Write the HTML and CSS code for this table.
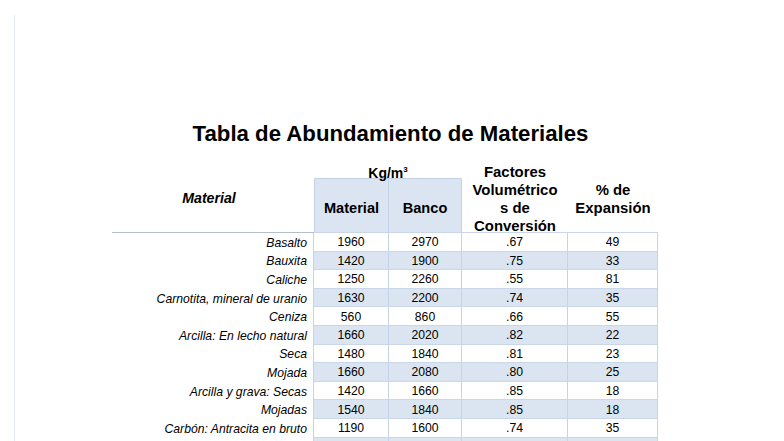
FILE: index.html
```html
<!DOCTYPE html>
<html lang="es">
<head>
<meta charset="utf-8">
<title>Tabla de Abundamiento de Materiales</title>
<link rel="stylesheet" href="styles.css">
</head>
<body>
<div class="sheet">
  <h1 class="title">Tabla de Abundamiento de Materiales</h1>
  <table class="grid">
    <colgroup>
      <col class="c-mat">
      <col class="c-n1">
      <col class="c-n2">
      <col class="c-fac">
      <col class="c-exp">
    </colgroup>
    <thead>
      <tr class="h1">
        <th rowspan="2" class="th-mat">Material</th>
        <th colspan="2" class="th-kg">Kg/m<sup>3</sup></th>
        <th rowspan="2" class="th-fac"><div class="lines">Factores<br>Volumétrico<br>s de<br>Conversión</div></th>
        <th rowspan="2" class="th-exp"><div class="lines">% de<br>Expansión</div></th>
      </tr>
      <tr class="h2">
        <th class="th-box th-box1">Material</th>
        <th class="th-box th-box2">Banco</th>
      </tr>
    </thead>
    <tbody>
      <tr><td>Basalto</td><td>1960</td><td>2970</td><td>.67</td><td>49</td></tr>
      <tr><td>Bauxita</td><td>1420</td><td>1900</td><td>.75</td><td>33</td></tr>
      <tr><td>Caliche</td><td>1250</td><td>2260</td><td>.55</td><td>81</td></tr>
      <tr><td>Carnotita, mineral de uranio</td><td>1630</td><td>2200</td><td>.74</td><td>35</td></tr>
      <tr><td>Ceniza</td><td>560</td><td>860</td><td>.66</td><td>55</td></tr>
      <tr><td>Arcilla: En lecho natural</td><td>1660</td><td>2020</td><td>.82</td><td>22</td></tr>
      <tr><td>Seca</td><td>1480</td><td>1840</td><td>.81</td><td>23</td></tr>
      <tr><td>Mojada</td><td>1660</td><td>2080</td><td>.80</td><td>25</td></tr>
      <tr><td>Arcilla y grava: Secas</td><td>1420</td><td>1660</td><td>.85</td><td>18</td></tr>
      <tr><td>Mojadas</td><td>1540</td><td>1840</td><td>.85</td><td>18</td></tr>
      <tr><td>Carbón: Antracita en bruto</td><td>1190</td><td>1600</td><td>.74</td><td>35</td></tr>
      <tr class="tail"><td></td><td></td><td></td><td></td><td></td></tr>
    </tbody>
  </table>
</div>
</body>
</html>
```
FILE: styles.css
```css
html, body {
  margin: 0;
  padding: 0;
  height: 441px;
  overflow: hidden;
  background: #ffffff;
}

body {
  font-family: "Liberation Sans", Arial, sans-serif;
  color: #000000;
}

.sheet {
  margin: 15px 0 0 14px;
  border-left: 1px solid #e3eaf4;
  height: 426px;
}

.title {
  margin: 0;
  padding: 106px 18px 0 0;
  font-size: 22.2px;
  line-height: 25px;
  font-weight: bold;
  text-align: center;
}

.grid {
  margin: 14px 0 0 97px;
  width: 546px;
  table-layout: fixed;
  border-collapse: separate;
  border-spacing: 0;
}

.c-mat { width: 202px; }
.c-n1 { width: 75px; }
.c-n2 { width: 73px; }
.c-fac { width: 106px; }
.c-exp { width: 90px; }

.grid th {
  padding: 0;
  font-weight: bold;
  font-size: 14.9px;
  line-height: 18px;
  vertical-align: top;
  text-align: center;
  border-bottom: 1px solid #c8d6e8;
}

.h1 { height: 18px; }
.h2 { height: 55px; }

.th-mat {
  font-style: italic;
  font-size: 14.2px !important;
  line-height: 17.5px !important;
  text-align: right;
  padding-right: 8px !important;
  padding-top: 30px !important;
  border-bottom-color: #b5bfcc !important;
}

.th-kg {
  font-size: 14px !important;
  line-height: 10px !important;
  padding-top: 8px !important;
  border-bottom: none !important;
}

.th-kg sup {
  font-size: 8px;
  vertical-align: 6px;
  line-height: 0;
}

.lines {
  height: 60px;
  overflow: visible;
}

.th-fac {
  padding-top: 3px !important;
}

.th-exp {
  padding-top: 21px !important;
}

.th-exp .lines {
  height: 40px;
}

.th-box {
  font-size: 14.6px !important;
  background: #dbe5f1;
  border-top: 1px solid #c3d2e6;
  border-right: 1px solid #c3d2e6;
  padding-top: 21px !important;
  line-height: 17px !important;
}

.th-box1 {
  border-left: 1px solid #c3d2e6;
}

.grid td {
  height: 18.6px;
  padding: 1px 0 0 0;
  font-size: 12.2px;
  line-height: 14px;
  text-align: center;
  vertical-align: middle;
  border-bottom: 1px solid #cad7e9;
  border-right: 1px solid #c6d4e8;
  box-sizing: border-box;
}

.grid td:first-child {
  text-align: right;
  font-style: italic;
  padding-right: 6px;
  border-right: 1px solid #c6d4e8;
  border-bottom: none;
}

.grid tbody tr:nth-child(even) td:not(:first-child) {
  background: #dbe5f1;
}
```
